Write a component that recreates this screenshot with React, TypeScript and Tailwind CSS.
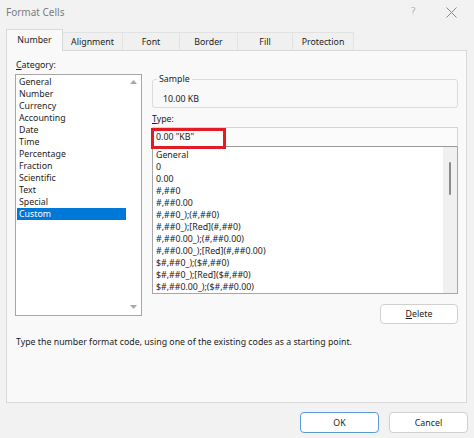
import React from "react";

const categories = [
  "General",
  "Number",
  "Currency",
  "Accounting",
  "Date",
  "Time",
  "Percentage",
  "Fraction",
  "Scientific",
  "Text",
  "Special",
  "Custom",
];

const formats = [
  "General",
  "0",
  "0.00",
  "#,##0",
  "#,##0.00",
  "#,##0_);(#,##0)",
  "#,##0_);[Red](#,##0)",
  "#,##0.00_);(#,##0.00)",
  "#,##0.00_);[Red](#,##0.00)",
  "$#,##0_);($#,##0)",
  "$#,##0_);[Red]($#,##0)",
  "$#,##0.00_);($#,##0.00)",
];

const tabs = [
  { label: "Number", w: "w-[57px]" },
  { label: "Alignment", w: "w-[60px]" },
  { label: "Font", w: "w-[57px]" },
  { label: "Border", w: "w-[58px]" },
  { label: "Fill", w: "w-[55px]" },
  { label: "Protection", w: "w-[61px]" },
];

export default function App() {
  return (
    <div className="w-[474px] h-[438px] bg-[#f2f2f2] overflow-hidden font-['Noto_Sans',sans-serif] text-[8.8px] leading-[12px] text-[#1b1b1b]">
      {/* Title bar */}
      <div className="h-[24px] flex items-center justify-between pl-[6px] pr-[17px]">
        <span className="text-[10px] text-[#7d7d7d]">Format Cells</span>
        <div className="flex items-center gap-[30px]">
          <span className="text-[11px] text-[#8a8a8a] font-['DejaVu_Sans',sans-serif] font-light">?</span>
          <svg width="11" height="11" viewBox="0 0 11 11">
            <path d="M0.5 0.5 L10.5 10.5 M10.5 0.5 L0.5 10.5" stroke="#8a8a8a" strokeWidth="1" />
          </svg>
        </div>
      </div>

      {/* Tabs */}
      <div className="h-[26px] flex items-end pl-[6px]">
        {tabs.map((t, i) =>
          i === 0 ? (
            <div
              key={t.label}
              className={`${t.w} h-[22px] mb-[-1px] relative z-10 bg-[#f9f9f9] border border-b-0 border-[#d9d9d9] flex items-center justify-center pb-[1px]`}
            >
              {t.label}
            </div>
          ) : (
            <div
              key={t.label}
              className={`${t.w} h-[18px] bg-[#f0f0f0] border-t border-r border-[#e2e2e2] flex items-center justify-center`}
            >
              {t.label}
            </div>
          )
        )}
      </div>

      {/* Content panel */}
      <div className="ml-[6px] w-[461px] h-[353px] bg-[#f9f9f9] border border-[#d9d9d9] pl-[8px] pt-[8px]">
        <div className="flex gap-[10px]">
          {/* Left column */}
          <div className="w-[127px] flex flex-col">
            <div className="ml-[1px] mb-[3px]">
              <u className="underline-offset-[1px]">C</u>ategory:
            </div>
            <div className="h-[242px] bg-white border border-[#a6a6a6] flex">
              <div className="flex-1 pt-[1px] pl-[1px]">
                {categories.map((c) =>
                  c === "Custom" ? (
                    <div key={c} className="h-[12px] bg-[#0078d7] text-white pl-[2px]">
                      {c}
                    </div>
                  ) : (
                    <div key={c} className="h-[12px] pl-[2px]">
                      {c}
                    </div>
                  )
                )}
              </div>
              <div className="w-[15px] flex flex-col justify-between items-center pt-[5px] pb-[6px]">
                <svg width="7" height="4" viewBox="0 0 7 4">
                  <path d="M0 4 L3.5 0 L7 4 Z" fill="#a8a8a8" />
                </svg>
                <svg width="7" height="4" viewBox="0 0 7 4">
                  <path d="M0 0 L7 0 L3.5 4 Z" fill="#a8a8a8" />
                </svg>
              </div>
            </div>
          </div>

          {/* Right column */}
          <div className="w-[306px] flex flex-col">
            <fieldset className="mt-[14px] h-[35px] border border-[#dcdcdc] rounded-[3px] pl-[4px]">
              <legend className="px-[2px] h-[12px]">Sample</legend>
              <div className="pl-[6px] pt-[8px]">10.00 KB</div>
            </fieldset>
            <div className="mt-[5px]">
              <u className="underline-offset-[1px]">T</u>ype:
            </div>
            <div className="mt-[2px] relative h-[20px] bg-[#fbfbfb] border border-[#d4d4d4] border-b-[#9a9a9a] flex items-center pl-[3px]">
              0.00 "KB"
              <div className="absolute left-[-2px] top-[0px] w-[75px] h-[21px] border-[3px] border-[#e21b25]" />
            </div>
            <div className="h-[147px] bg-white border border-t-0 border-[#a6a6a6] flex">
              <div className="flex-1 pt-[2px] pl-[3px]">
                {formats.map((f) => (
                  <div key={f} className="h-[12px] whitespace-pre">
                    {f}
                  </div>
                ))}
              </div>
              <div className="w-[14px] bg-[#f0f0f0] flex justify-center pt-[15px]">
                <div className="w-[2px] h-[33px] bg-[#8a8a8a] rounded-full" />
              </div>
            </div>
            <div className="mt-[10px] flex justify-end">
              <button className="w-[78px] h-[20px] bg-white border border-[#d0d0d0] rounded-[4px] flex items-center justify-center">
                <span>
                  <u className="underline-offset-[1px]">D</u>elete
                </span>
              </button>
            </div>
          </div>
        </div>
        <div className="mt-[12px] ml-[1px]">
          Type the number format code, using one of the existing codes as a starting point.
        </div>
      </div>

      {/* Footer */}
      <div className="flex justify-end gap-[10px] pt-[9px] pr-[6px]">
        <button className="w-[79px] h-[21px] bg-white border border-[#5b9bd5] rounded-[4px] flex items-center justify-center">
          OK
        </button>
        <button className="w-[79px] h-[21px] bg-white border border-[#d0d0d0] rounded-[4px] flex items-center justify-center">
          Cancel
        </button>
      </div>
    </div>
  );
}
